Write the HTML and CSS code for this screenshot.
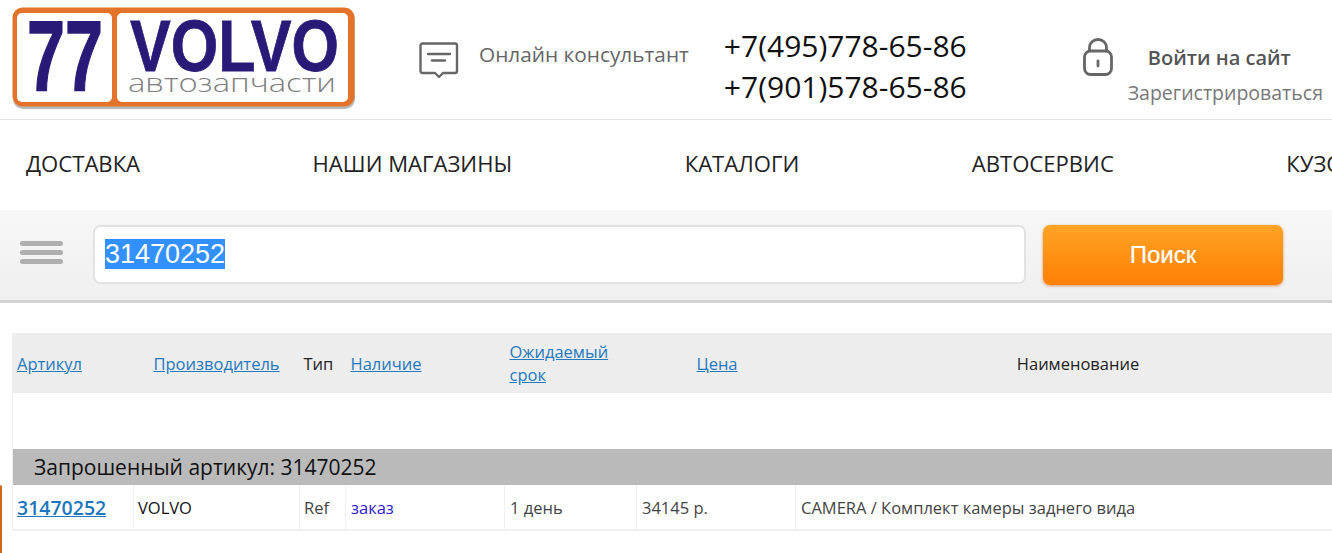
FILE: index.html
```html
<!DOCTYPE html>
<html lang="ru">
<head>
<meta charset="utf-8">
<title>77 VOLVO автозапчасти</title>
<link rel="stylesheet" href="styles.css">
</head>
<body>
<div class="edge-tab"></div>
<header class="top">
  <svg class="logo" width="345" height="103" viewBox="0 0 345 103">
    <defs><filter id="s" x="-5%" y="-5%" width="110%" height="110%"><feGaussianBlur stdDeviation="0.6"/></filter></defs>
    <rect x="1" y="2" width="342" height="100" rx="10" fill="#b8b8b8" filter="url(#s)"/>
    <rect x="0.500" y="0.500" width="342" height="99" rx="10" fill="#e3722b"/>
    <rect x="5" y="6" width="95" height="89" rx="5" fill="#fff"/>
    <rect x="105" y="6" width="231" height="89" rx="5" fill="#fff"/>
    <text class="logo-77" x="15" y="84" textLength="76" lengthAdjust="spacingAndGlyphs">77</text>
    <text class="logo-volvo" x="118" y="64" textLength="209" lengthAdjust="spacingAndGlyphs">VOLVO</text>
    <text class="logo-sub" x="116" y="85" textLength="208" lengthAdjust="spacingAndGlyphs">автозапчасти</text>
  </svg>
  <a class="chat">
    <svg width="40" height="38" viewBox="0 0 40 38" fill="none" stroke="#666" stroke-width="2.400" stroke-linejoin="round" stroke-linecap="round">
      <path d="M3.500 1.500H36a2 2 0 0 1 2 2V29a2 2 0 0 1-2 2H24l-4 4-4-4H3.500a2 2 0 0 1-2-2V3.500a2 2 0 0 1 2-2Z"/>
      <path d="M9 12H31M13 18.500H26"/>
    </svg>
    <span>Онлайн консультант</span>
  </a>
  <div class="phones">
    <div>+7(495)778-65-86</div>
    <div>+7(901)578-65-86</div>
  </div>
  <svg class="lock" width="30" height="38" viewBox="0 0 30 38" fill="none" stroke="#666" stroke-width="2.800">
    <path d="M6.500 13V9.500a8.500 8 0 0 1 17 0V13"/>
    <rect x="1.500" y="13" width="27" height="23.500" rx="6"/>
    <path d="M15 23v5" stroke-linecap="round"/>
  </svg>
  <div class="account">
    <a class="login">Войти на сайт</a>
    <a class="register">Зарегистрироваться</a>
  </div>
</header>
<nav class="nav">
  <a>ДОСТАВКА</a>
  <a>НАШИ МАГАЗИНЫ</a>
  <a>КАТАЛОГИ</a>
  <a>АВТОСЕРВИС</a>
  <a>КУЗОВНОЙ РЕМОНТ</a>
</nav>
<section class="search">
  <div class="burger"><i></i><i></i><i></i></div>
  <div class="field"><span class="selected">31470252</span></div>
  <button class="go">Поиск</button>
</section>
<main class="results">
  <table class="parts">
    <colgroup>
      <col class="c1"><col class="c2"><col class="c3"><col class="c4"><col class="c5"><col class="c6"><col class="c7">
    </colgroup>
    <thead>
      <tr>
        <th class="tight"><a href="#">Артикул</a></th>
        <th class="wide-2"><a href="#">Производитель</a></th>
        <th class="tight">Тип</th>
        <th><a href="#">Наличие</a></th>
        <th><a href="#">Ожидаемый<br>срок</a></th>
        <th class="wide-6"><a href="#">Цена</a></th>
        <th class="center">Наименование</th>
      </tr>
    </thead>
    <tbody>
      <tr class="blank"><td colspan="7"></td></tr>
      <tr class="group"><td colspan="7">Запрошенный артикул: 31470252</td></tr>
      <tr class="item">
        <td class="tight"><a class="sku" href="#">31470252</a></td>
        <td class="tight brand">VOLVO</td>
        <td class="tight">Ref</td>
        <td class="stock">заказ</td>
        <td>1 день</td>
        <td>34145 р.</td>
        <td>CAMERA / Комплект камеры заднего вида</td>
      </tr>
    </tbody>
  </table>
</main>
</body>
</html>
```

FILE: styles.css
```css
html, body {
  margin: 0;
  padding: 0;
  height: 553px;
  overflow: hidden;
  background: #fff;
  font-family: "Open Sans", sans-serif;
  color: #222;
}
.edge-tab {
  position: absolute;
  left: 0;
  top: 485px;
  width: 2px;
  height: 68px;
  background: #c96a1c;
  border-radius: 0 3px 0 0;
}
.top {
  display: flex;
  align-items: flex-start;
  height: 119px;
  border-bottom: 1px solid #e6e6e6;
  padding-left: 12px;
  box-sizing: content-box;
}
.logo { margin-top: 7px; flex: none; }
.logo-77 { font: 700 100px "Liberation Sans", sans-serif; fill: #2a1a78; stroke: #2a1a78; stroke-width: 1.500px; }
.logo-volvo { font: 700 72px "Liberation Sans", sans-serif; fill: #2a1a78; stroke: #2a1a78; stroke-width: .8px; }
.logo-sub { font: 300 26px "Open Sans", sans-serif; fill: #7f7f7f; }
.chat {
  display: flex;
  align-items: center;
  gap: 20px;
  margin: 40px 0 0 62px;
  color: #666;
  font-size: 20.800px;
  line-height: 28px;
  flex: none;
}
.chat svg { margin-top: 2px; }
.chat span { margin-top: -12px; }
.phones {
  margin: 25px 0 0 35px;
  font-size: 30px;
  line-height: 41px;
  color: #111;
  flex: none;
}
.lock { margin: 38px 0 0 116px; flex: none; }
.account {
  display: flex;
  flex-direction: column;
  align-items: center;
  margin: 43px 0 0 15px;
  flex: none;
}
.login { font-size: 20px; font-weight: 600; color: #555; line-height: 30px; margin-right: 12px; }
.register { font-size: 19.500px; color: #777; line-height: 26px; margin-top: 7px; }
.nav {
  display: flex;
  gap: 172.500px;
  height: 90px;
  box-sizing: border-box;
  padding: 0 0 5px 26px;
  align-items: center;
  white-space: nowrap;
  font-size: 22.100px;
  color: #222;
  background: #fff;
}
.search {
  display: flex;
  align-items: flex-start;
  height: 90px;
  padding-left: 20px;
  background: linear-gradient(#f7f7f7, #efefef);
  border-bottom: 3px solid #d2d2d2;
  box-sizing: content-box;
}
.burger {
  display: flex;
  flex-direction: column;
  gap: 4px;
  width: 43px;
  margin-top: 31px;
  flex: none;
}
.burger i { display: block; height: 5px; border-radius: 3px; background: #afafaf; }
.field {
  flex: none;
  width: 933px;
  height: 59px;
  margin: 15px 0 0 30px;
  box-sizing: border-box;
  border: 2px solid #e2e2e2;
  border-radius: 7px;
  background: #fff;
  padding: 12px 0 0 10px;
  font: 27px/30px "Liberation Sans", sans-serif;
}
.selected { background: #3390ff; color: #fff; display: inline-block; }
.go {
  flex: none;
  width: 240px;
  height: 60px;
  margin: 15px 0 0 17px;
  border: 0;
  border-radius: 7px;
  background: linear-gradient(#ffa426, #ff7f02);
  box-shadow: 0 1px 3px rgba(200, 90, 0, .6);
  color: #fff;
  font: 24px "Liberation Sans", sans-serif;
  text-shadow: 0 0 1px rgba(255,255,255,.5);
}
.results { padding: 30px 0 0 12px; }
.parts {
  width: 1349px;
  table-layout: fixed;
  border-collapse: collapse;
  font-size: 16.500px;
  border-left: 1px solid #f0f0f0;
}
.c1 { width: 121px; }
.c2 { width: 166px; }
.c3 { width: 46px; }
.c4 { width: 159px; }
.c5 { width: 132px; }
.c6 { width: 159px; }
.parts a { color: #2479bf; }
.parts th {
  height: 60px;
  padding: 0 5px;
  background: #ededed;
  font-weight: 400;
  text-align: left;
  line-height: 23px;
  color: #222;
  box-sizing: border-box;
}
.parts th.center { text-align: center; }
.parts th.tight, .parts td.tight { padding-left: 4px; }
.parts th.wide-2 { padding-left: 20px; }
.parts th.wide-6 { padding-left: 60px; }
.blank td { height: 56px; padding: 0; }
.group td {
  height: 36px;
  padding: 0 0 0 21px;
  background: #bababa;
  color: #111;
  font-size: 21px;
  box-sizing: border-box;
}
.item td {
  height: 45px;
  padding: 0 5px;
  box-sizing: border-box;
  border-right: 1px solid #f1f1f1;
  border-bottom: 2px solid #f1f1f1;
  color: #444;
}
.item .sku { font-size: 19.500px; font-weight: 600; color: #1c77bd; }
.item .brand { color: #111; }
.item .stock { color: #2f22c8; }
```
